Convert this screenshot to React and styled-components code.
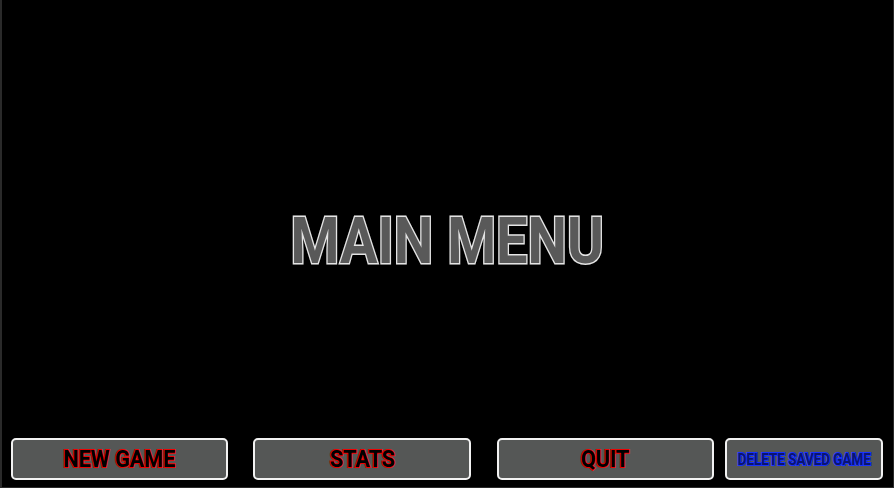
import styled, { createGlobalStyle } from "styled-components";

const Global = createGlobalStyle`
  html, body {
    margin: 0;
    padding: 0;
    background: #000;
  }
  * { box-sizing: border-box; }
`;

const Screen = styled.div`
  width: 100vw;
  height: 100vh;
  background: #000;
  border-left: 2px solid #2a2a2a;
  border-right: 1px solid #2a2a2a;
  border-bottom: 1px solid #2a2a2a;
  display: flex;
  flex-direction: column;
  font-family: Roboto, "Liberation Sans", sans-serif;
`;

const Center = styled.div`
  flex: 1;
  display: flex;
  align-items: center;
  justify-content: center;
  padding-top: 44px;
`;

// the game font is narrower than Roboto, so squeeze it a little
const Narrow = styled.span`
  display: inline-block;
  transform: scaleX(${(p) => p.$k || 0.86});
  white-space: nowrap;
`;

const Title = styled.h1`
  margin: 0;
  font-size: 65px;
  font-weight: 700;
  color: #595959;
  -webkit-text-stroke: 3px #e4e4e4;
  paint-order: stroke fill;
  line-height: 1;
`;

const Bar = styled.div`
  display: flex;
  padding: 0 10px 7px 9px;
`;

const Button = styled.button`
  height: 42px;
  width: ${(p) => (p.$small ? "158px" : "218px")};
  margin-left: ${(p) => p.$gap || 0}px;
  background: #555756;
  border: 2px solid #f2f2f2;
  border-radius: 5px;
  display: flex;
  align-items: center;
  justify-content: center;
  font-family: Roboto, "Liberation Sans", sans-serif;
  font-weight: 700;
  font-size: ${(p) => (p.$small ? "16px" : "24px")};
  color: ${(p) => (p.$small ? "#0b1570" : "#000")};
  -webkit-text-stroke: ${(p) => (p.$small ? "2px #1530ff" : "2px #ee0000")};
  paint-order: stroke fill;
  padding: 0;
`;

export default function App() {
  return (
    <>
      <Global />
      <Screen>
        <Center>
          <Title>
            <Narrow $k={0.86}>MAIN MENU</Narrow>
          </Title>
        </Center>
        <Bar>
          <Button>
            <Narrow $k={0.9}>NEW GAME</Narrow>
          </Button>
          <Button $gap={25}>
            <Narrow $k={0.9}>STATS</Narrow>
          </Button>
          <Button $gap={26}>
            <Narrow $k={0.9}>QUIT</Narrow>
          </Button>
          <Button $gap={11} $small>
            <Narrow $k={0.84}>DELETE SAVED GAME</Narrow>
          </Button>
        </Bar>
      </Screen>
    </>
  );
}
